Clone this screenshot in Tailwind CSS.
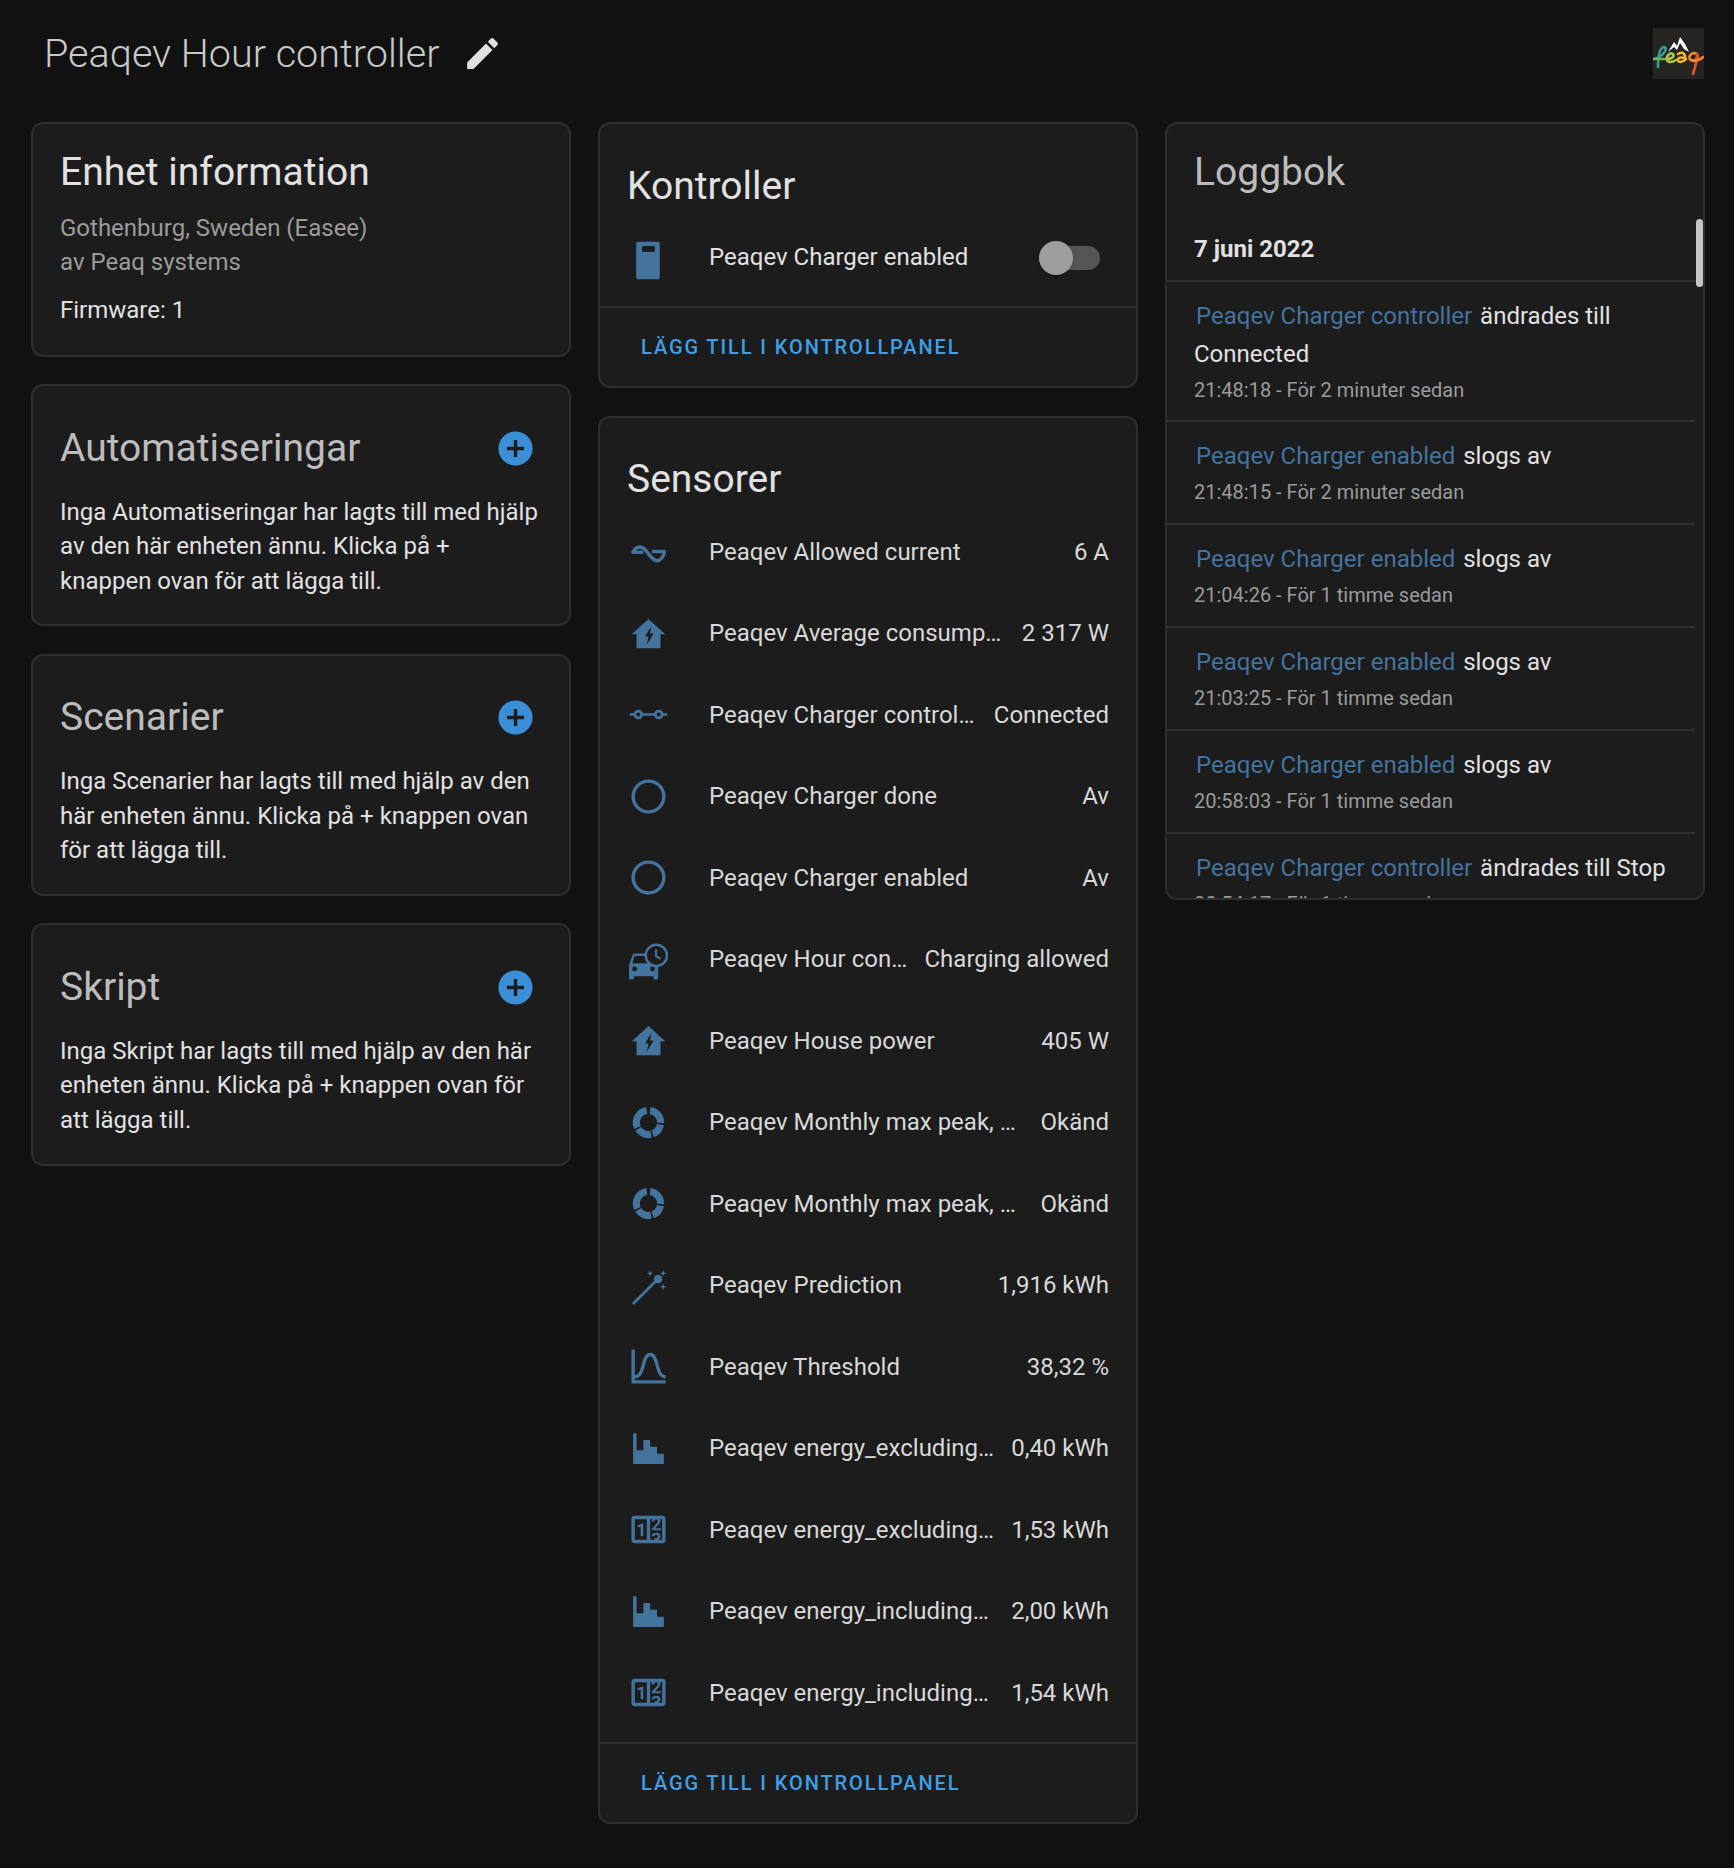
<!DOCTYPE html>
<html lang="en">
<head>
    <meta charset="UTF-8">
    <title>Peaqev Hour controller</title>
    <script src="https://cdn.jsdelivr.net/npm/@tailwindcss/browser@4"></script>
</head>
<body class="bg-[#111111] text-[#e1e1e1] font-[Roboto,sans-serif] text-[24px] leading-[34.5px] min-h-[1868px] overflow-hidden">

    <!-- shared icons -->
    <svg class="hidden">
        <symbol id="i-plus" viewBox="0 0 24 24"><path fill="currentColor" d="M17,13H13V17H11V13H7V11H11V7H13V11H17M12,2A10,10 0 0,0 2,12A10,10 0 0,0 12,22A10,10 0 0,0 22,12A10,10 0 0,0 12,2Z"/></symbol>
        <symbol id="i-home" viewBox="0 0 24 24"><path fill="currentColor" fill-rule="evenodd" d="M12 3.5L2.2 12.5H5V20.7H19V12.5H21.8L12 3.5ZM13.6 7.8L10 13.8H12L11 18.6L15 12H12.9L13.6 7.8Z"/></symbol>
        <symbol id="i-ring" viewBox="0 0 24 24"><circle cx="12" cy="12" r="9" fill="none" stroke="currentColor" stroke-width="2"/></symbol>
        <symbol id="i-donut" viewBox="0 0 24 24"><g fill="none" stroke="currentColor" stroke-width="4.2"><path d="M12.99 4.97A7.1 7.1 0 0 1 19.1 12.25"/><path d="M18.99 13.23A7.1 7.1 0 0 1 14.43 18.67"/><path d="M13.48 18.94A7.1 7.1 0 0 1 5.98 15.76"/><path d="M5.51 14.89A7.1 7.1 0 0 1 11.01 4.97"/></g></symbol>
        <symbol id="i-hist" viewBox="0 0 24 24"><path fill="currentColor" d="M3,3H5V13H9V7H13V11H17V15H21V21H3V3Z"/></symbol>
        <symbol id="i-counter" viewBox="0 0 24 24"><path fill="currentColor" d="M4,4H20A2,2 0 0,1 22,6V18A2,2 0 0,1 20,20H4A2,2 0 0,1 2,18V6A2,2 0 0,1 4,4M4,6V18H11V6H4M20,18V6H18.76C19,6.54 18.95,7.07 18.95,7.13C18.88,7.8 18.41,8.5 18.24,8.75L15.91,11.3L19.23,11.28L19.24,12.5L14.04,12.47L14,11.47C14,11.47 17.05,8.24 17.2,7.95C17.34,7.67 17.91,6 16.5,6C15.27,6.05 15.41,7.3 15.41,7.3L13.87,7.31C13.87,7.31 13.88,6.65 14.25,6H13V18H15.58L15.57,17.14L16.54,17.13C16.54,17.13 17.45,16.97 17.46,16.08C17.5,15.08 16.65,15.08 16.5,15.08C16.37,15.08 15.43,15.13 15.43,15.95H13.91C13.91,15.95 13.95,13.89 16.5,13.89C19.1,13.89 18.96,15.91 18.96,15.91C18.96,15.91 19,17.16 17.85,17.63L18.37,18H20M8.92,16H7.42V10.2L5.62,10.76V9.53L8.76,8.41H8.92V16Z"/></symbol>
    </svg>

    <!-- Header -->
    <header class="h-[107px] mb-[15px] pl-[44px] pr-[30px] flex items-center">
        <h1 class="text-[39.6px] leading-[54px] text-[#c8c8c8] font-light">Peaqev Hour controller</h1>
        <svg class="w-[41px] h-[41px] ml-[22px] text-[#e1e1e1]" viewBox="0 0 24 24"><path fill="currentColor" d="M20.71,7.04C21.1,6.65 21.1,6 20.71,5.63L18.37,3.29C18,2.9 17.35,2.9 16.96,3.29L15.12,5.12L18.87,8.87M3,17.25V21H6.75L17.81,9.93L14.06,6.18L3,17.25Z"/></svg>
        <!-- logo -->
        <svg class="w-[51px] h-[51px] ml-auto bg-[#262422]" viewBox="0 0 51 51" fill="none" stroke-linecap="round" stroke-linejoin="round">
            <polygon fill="#ffffff" points="15,24 21,14 24,18 27,9 32,16 36,24 31,21 27,15 24,22 21,19"/>
            <g stroke-width="2.6">
                <path stroke="#3a9d8f" d="M5 39C5 30 6 20 11 19C15 19 12 28 1 31"/>
                <path stroke="#6fb24e" d="M1 31H12"/>
                <path stroke="#a9c64a" d="M14 31C18 31 22 29 20 26C17 24 13 28 14 32C15 35 20 34 23 32"/>
                <path stroke="#f2b632" d="M25 26C30 23 33 26 32 32C28 35 24 34 25 31C26 29 30 29 33 31"/>
                <path stroke="#f08a2b" d="M44 26C38 23 34 30 38 32C42 34 46 30 44 26"/>
                <path stroke="#e2552b" d="M44 26C44 32 42 40 40 46"/>
                <path stroke="#f08a2b" d="M40 33C44 33 47 32 50 29"/>
            </g>
        </svg>
    </header>

    <main class="flex gap-[27px] pl-[31px] items-start">

        <!-- Column 1 -->
        <div class="w-[540px] flex flex-col gap-[27.5px]">
            <section class="bg-[#1c1c1c] border-2 border-[#2e2e2e] rounded-[12px] pt-[21px] pb-[27.5px] px-[27px]">
                <h2 class="text-[39px] leading-[54px]">Enhet information</h2>
                <div class="mt-[12px] text-[#9b9b9b] leading-[34px]">Gothenburg, Sweden (Easee)<br>av Peaq systems</div>
                <div class="mt-[14px] leading-[34px]">Firmware: 1</div>
            </section>

            <section class="bg-[#1c1c1c] border-2 border-[#2e2e2e] rounded-[12px] pt-[35px] pb-[26px] px-[27px]">
                <div class="flex items-center justify-between h-[54px] pr-[6.5px]">
                    <h2 class="text-[39px] leading-[54px] text-[#bcbcbc]">Automatiseringar</h2>
                    <svg class="w-[41px] h-[41px] text-[#3a8fd6]"><use href="#i-plus"/></svg>
                </div>
                <p class="mt-[19.5px]">Inga Automatiseringar har lagts till med hjälp av den här enheten ännu. Klicka på + knappen ovan för att lägga till.</p>
            </section>

            <section class="bg-[#1c1c1c] border-2 border-[#2e2e2e] rounded-[12px] pt-[34.5px] pb-[26px] px-[27px]">
                <div class="flex items-center justify-between h-[54px] pr-[6.5px]">
                    <h2 class="text-[39px] leading-[54px] text-[#bcbcbc]">Scenarier</h2>
                    <svg class="w-[41px] h-[41px] text-[#3a8fd6]"><use href="#i-plus"/></svg>
                </div>
                <p class="mt-[20px]">Inga Scenarier har lagts till med hjälp av den här enheten ännu. Klicka på + knappen ovan för att lägga till.</p>
            </section>

            <section class="bg-[#1c1c1c] border-2 border-[#2e2e2e] rounded-[12px] pt-[35px] pb-[27px] px-[27px]">
                <div class="flex items-center justify-between h-[54px] pr-[6.5px]">
                    <h2 class="text-[39px] leading-[54px] text-[#bcbcbc]">Skript</h2>
                    <svg class="w-[41px] h-[41px] text-[#3a8fd6]"><use href="#i-plus"/></svg>
                </div>
                <p class="mt-[19.5px]">Inga Skript har lagts till med hjälp av den här enheten ännu. Klicka på + knappen ovan för att lägga till.</p>
            </section>
        </div>

        <!-- Column 2 -->
        <div class="w-[540px] flex flex-col gap-[28px]">
            <section class="bg-[#1c1c1c] border-2 border-[#2e2e2e] rounded-[12px] pt-[34.5px]">
                <h2 class="text-[39px] leading-[54px] px-[27px]">Kontroller</h2>
                <div class="mt-[4px] mb-[7.5px] h-[82px] pl-[29px] pr-[36px] flex items-center">
                    <svg class="w-[41px] h-[41px] mt-[5px] shrink-0 text-[#44739e]" viewBox="0 0 24 24"><path fill="currentColor" fill-rule="evenodd" d="M5.2 1H17A1 1 0 0 1 18 2V22A1 1 0 0 1 17 23H5.2A1 1 0 0 1 4.2 22V2A1 1 0 0 1 5.2 1ZM8.4 3.5A.8.8 0 0 0 7.6 4.3V6.2A.8.8 0 0 0 8.4 7H14.4A.8.8 0 0 0 15.2 6.2V4.3A.8.8 0 0 0 14.4 3.5Z"/></svg>
                    <span class="ml-[39px] flex-1">Peaqev Charger enabled</span>
                    <span class="relative w-[61px] h-[24px] rounded-full bg-[#555555]">
                        <span class="absolute left-0 top-[-5px] w-[34px] h-[34px] rounded-full bg-[#9e9e9e] shadow-md"></span>
                    </span>
                </div>
                <div class="border-t-2 border-[#2e2e2e] h-[80px] pl-[41px] flex items-center text-[20px] font-medium tracking-[1.9px] text-[#3f9fe6]">LÄGG TILL I KONTROLLPANEL</div>
            </section>

            <section class="bg-[#1c1c1c] border-2 border-[#2e2e2e] rounded-[12px] pt-[33.5px]">
                <h2 class="text-[39px] leading-[54px] px-[27px]">Sensorer</h2>
                <div class="mt-[5.5px] mb-[8.5px] text-[#d8d8d8]">
                    <div class="h-[81.5px] pl-[28px] pr-[27px] flex items-center">
                        <svg class="w-[41px] h-[41px] shrink-0 text-[#44739e]" viewBox="0 0 24 24"><g fill="none" stroke="currentColor" stroke-width="2"><path d="M3 12.4C4 10.2 5.5 9.4 7 9.4C9.5 9.4 10.5 11.4 12 13.4C13.5 15.4 15 17.4 17 17.4C19 17.4 21 14.9 21.4 12"/><path d="M2 12.4H9"/><path d="M14 12H22"/></g></svg>
                        <span class="ml-[40px] flex-1 min-w-0 truncate">Peaqev Allowed current</span>
                        <span class="ml-[16.5px] shrink-0">6 A</span>
                    </div>
                    <div class="h-[81.5px] pl-[28px] pr-[27px] flex items-center">
                        <svg class="w-[41px] h-[41px] shrink-0 text-[#44739e]"><use href="#i-home"/></svg>
                        <span class="ml-[40px] flex-1 min-w-0 truncate">Peaqev Average consumption</span>
                        <span class="ml-[16.5px] shrink-0">2 317 W</span>
                    </div>
                    <div class="h-[81.5px] pl-[28px] pr-[27px] flex items-center">
                        <svg class="w-[41px] h-[41px] shrink-0 text-[#44739e]" viewBox="0 0 24 24"><g stroke="currentColor" stroke-width="1.6"><path d="M1 12H23"/><circle cx="6" cy="12" r="2" fill="#1c1c1c"/><circle cx="18" cy="12" r="2" fill="#1c1c1c"/></g></svg>
                        <span class="ml-[40px] flex-1 min-w-0 truncate">Peaqev Charger controller</span>
                        <span class="ml-[16.5px] shrink-0">Connected</span>
                    </div>
                    <div class="h-[81.5px] pl-[28px] pr-[27px] flex items-center">
                        <svg class="w-[41px] h-[41px] shrink-0 text-[#44739e]"><use href="#i-ring"/></svg>
                        <span class="ml-[40px] flex-1 min-w-0 truncate">Peaqev Charger done</span>
                        <span class="ml-[16.5px] shrink-0">Av</span>
                    </div>
                    <div class="h-[81.5px] pl-[28px] pr-[27px] flex items-center">
                        <svg class="w-[41px] h-[41px] shrink-0 text-[#44739e]"><use href="#i-ring"/></svg>
                        <span class="ml-[40px] flex-1 min-w-0 truncate">Peaqev Charger enabled</span>
                        <span class="ml-[16.5px] shrink-0">Av</span>
                    </div>
                    <div class="h-[81.5px] pl-[28px] pr-[27px] flex items-center">
                        <svg class="w-[41px] h-[41px] shrink-0 text-[#44739e]" viewBox="0 0 24 24"><path fill="currentColor" transform="translate(-2.25 3.75) scale(.95)" d="M5,11L6.5,6.5H17.5L19,11M17.5,16A1.5,1.5 0 0,1 16,14.5A1.5,1.5 0 0,1 17.5,13A1.5,1.5 0 0,1 19,14.5A1.5,1.5 0 0,1 17.5,16M6.5,16A1.5,1.5 0 0,1 5,14.5A1.5,1.5 0 0,1 6.5,13A1.5,1.5 0 0,1 8,14.5A1.5,1.5 0 0,1 6.5,16M18.92,6C18.72,5.42 18.16,5 17.5,5H6.5C5.84,5 5.28,5.42 5.08,6L3,12V20A1,1 0 0,0 4,21H5A1,1 0 0,0 6,20V19H18V20A1,1 0 0,0 19,21H20A1,1 0 0,0 21,20V12L18.92,6Z"/><circle cx="16.6" cy="9.6" r="6.2" fill="#1c1c1c" stroke="currentColor" stroke-width="1.4"/><path d="M16.4 6.2V10L19 11.6" fill="none" stroke="currentColor" stroke-width="1.3"/></svg>
                        <span class="ml-[40px] flex-1 min-w-0 truncate">Peaqev Hour controller status</span>
                        <span class="ml-[16.5px] shrink-0">Charging allowed</span>
                    </div>
                    <div class="h-[81.5px] pl-[28px] pr-[27px] flex items-center">
                        <svg class="w-[41px] h-[41px] shrink-0 text-[#44739e]"><use href="#i-home"/></svg>
                        <span class="ml-[40px] flex-1 min-w-0 truncate">Peaqev House power</span>
                        <span class="ml-[16.5px] shrink-0">405 W</span>
                    </div>
                    <div class="h-[81.5px] pl-[28px] pr-[27px] flex items-center">
                        <svg class="w-[41px] h-[41px] shrink-0 text-[#44739e]"><use href="#i-donut"/></svg>
                        <span class="ml-[40px] flex-1 min-w-0 truncate">Peaqev Monthly max peak, average</span>
                        <span class="ml-[16.5px] shrink-0">Okänd</span>
                    </div>
                    <div class="h-[81.5px] pl-[28px] pr-[27px] flex items-center">
                        <svg class="w-[41px] h-[41px] shrink-0 text-[#44739e]"><use href="#i-donut"/></svg>
                        <span class="ml-[40px] flex-1 min-w-0 truncate">Peaqev Monthly max peak, observed</span>
                        <span class="ml-[16.5px] shrink-0">Okänd</span>
                    </div>
                    <div class="h-[81.5px] pl-[28px] pr-[27px] flex items-center">
                        <svg class="w-[41px] h-[41px] shrink-0 text-[#44739e]" viewBox="0 0 24 24"><path d="M2.9 22.8L15.9 9.8" stroke="currentColor" stroke-width="1.7"/><circle cx="17.6" cy="8.2" r="2.5" fill="currentColor"/><path fill="currentColor" d="M12.9 2.9L13.4 4.4L14.9 4.9L13.4 5.4L12.9 6.9L12.4 5.4L10.9 4.9L12.4 4.4ZM20.6 2.9L21.1 4.4L22.6 4.9L21.1 5.4L20.6 6.9L20.1 5.4L18.6 4.9L20.1 4.4ZM20.6 10.8L21.1 12.3L22.6 12.8L21.1 13.3L20.6 14.8L20.1 13.3L18.6 12.8L20.1 12.3Z"/></svg>
                        <span class="ml-[40px] flex-1 min-w-0 truncate">Peaqev Prediction</span>
                        <span class="ml-[16.5px] shrink-0">1,916 kWh</span>
                    </div>
                    <div class="h-[81.5px] pl-[28px] pr-[27px] flex items-center">
                        <svg class="w-[41px] h-[41px] shrink-0 text-[#44739e]" viewBox="0 0 24 24"><path fill="currentColor" d="M9.96,11.31C10.82,8.1 11.5,6 13,6C14.5,6 15.18,8.1 16.04,11.31C17,14.92 18.1,19 22,19V17C19.8,17 19,14.54 17.97,10.8C17.08,7.46 16.15,4 13,4C9.85,4 8.92,7.46 8.03,10.8C7.03,14.54 6.2,17 4,17V2H2V22H22V20H4V19C7.9,19 9,14.92 9.96,11.31Z"/></svg>
                        <span class="ml-[40px] flex-1 min-w-0 truncate">Peaqev Threshold</span>
                        <span class="ml-[16.5px] shrink-0">38,32 %</span>
                    </div>
                    <div class="h-[81.5px] pl-[28px] pr-[27px] flex items-center">
                        <svg class="w-[41px] h-[41px] shrink-0 text-[#44739e]"><use href="#i-hist"/></svg>
                        <span class="ml-[40px] flex-1 min-w-0 truncate">Peaqev energy_excluding_car_daily</span>
                        <span class="ml-[16.5px] shrink-0">0,40 kWh</span>
                    </div>
                    <div class="h-[81.5px] pl-[28px] pr-[27px] flex items-center">
                        <svg class="w-[41px] h-[41px] shrink-0 text-[#44739e]"><use href="#i-counter"/></svg>
                        <span class="ml-[40px] flex-1 min-w-0 truncate">Peaqev energy_excluding_car_hourly</span>
                        <span class="ml-[16.5px] shrink-0">1,53 kWh</span>
                    </div>
                    <div class="h-[81.5px] pl-[28px] pr-[27px] flex items-center">
                        <svg class="w-[41px] h-[41px] shrink-0 text-[#44739e]"><use href="#i-hist"/></svg>
                        <span class="ml-[40px] flex-1 min-w-0 truncate">Peaqev energy_including_car_daily</span>
                        <span class="ml-[16.5px] shrink-0">2,00 kWh</span>
                    </div>
                    <div class="h-[81.5px] pl-[28px] pr-[27px] flex items-center">
                        <svg class="w-[41px] h-[41px] shrink-0 text-[#44739e]"><use href="#i-counter"/></svg>
                        <span class="ml-[40px] flex-1 min-w-0 truncate">Peaqev energy_including_car_hourly</span>
                        <span class="ml-[16.5px] shrink-0">1,54 kWh</span>
                    </div>
                </div>
                <div class="border-t-2 border-[#2e2e2e] h-[80px] pl-[41px] flex items-center text-[20px] font-medium tracking-[1.9px] text-[#3f9fe6]">LÄGG TILL I KONTROLLPANEL</div>
            </section>
        </div>

        <!-- Column 3 -->
        <section class="relative w-[540px] h-[778px] bg-[#1c1c1c] border-2 border-[#2e2e2e] rounded-[12px] overflow-hidden pt-[21px]">
            <h2 class="text-[39px] leading-[54px] px-[27px] text-[#bcbcbc]">Loggbok</h2>
            <div class="mt-[33px] h-[34px] px-[27px] font-bold">7 juni 2022</div>
            <div class="mt-[14px] border-t-2 border-[#2e2e2e]">
                <div class="pt-[15px] pb-[13px] pl-[27px] pr-[27px]">
                    <div class="leading-[38px]"><span class="text-[#44739e] ml-[2px] mr-[2px]">Peaqev Charger controller</span> ändrades till Connected</div>
                    <div class="text-[20px] leading-[34px] text-[#9b9b9b]">21:48:18 - För 2 minuter sedan</div>
                </div>
                <div class="mr-[8px] border-t-2 border-[#2e2e2e] pt-[15px] pb-[14px] pl-[27px]">
                    <div class="leading-[38px]"><span class="text-[#44739e] ml-[2px] mr-[2px]">Peaqev Charger enabled</span> slogs av</div>
                    <div class="text-[20px] leading-[34px] text-[#9b9b9b]">21:48:15 - För 2 minuter sedan</div>
                </div>
                <div class="mr-[8px] border-t-2 border-[#2e2e2e] pt-[15px] pb-[14px] pl-[27px]">
                    <div class="leading-[38px]"><span class="text-[#44739e] ml-[2px] mr-[2px]">Peaqev Charger enabled</span> slogs av</div>
                    <div class="text-[20px] leading-[34px] text-[#9b9b9b]">21:04:26 - För 1 timme sedan</div>
                </div>
                <div class="mr-[8px] border-t-2 border-[#2e2e2e] pt-[15px] pb-[14px] pl-[27px]">
                    <div class="leading-[38px]"><span class="text-[#44739e] ml-[2px] mr-[2px]">Peaqev Charger enabled</span> slogs av</div>
                    <div class="text-[20px] leading-[34px] text-[#9b9b9b]">21:03:25 - För 1 timme sedan</div>
                </div>
                <div class="mr-[8px] border-t-2 border-[#2e2e2e] pt-[15px] pb-[14px] pl-[27px]">
                    <div class="leading-[38px]"><span class="text-[#44739e] ml-[2px] mr-[2px]">Peaqev Charger enabled</span> slogs av</div>
                    <div class="text-[20px] leading-[34px] text-[#9b9b9b]">20:58:03 - För 1 timme sedan</div>
                </div>
                <div class="mr-[8px] border-t-2 border-[#2e2e2e] pt-[15px] pb-[14px] pl-[27px]">
                    <div class="leading-[38px]"><span class="text-[#44739e] ml-[2px] mr-[2px]">Peaqev Charger controller</span> ändrades till Stop</div>
                    <div class="text-[20px] leading-[34px] text-[#9b9b9b]">20:54:17 - För 1 timme sedan</div>
                </div>
            </div>
            <!-- scrollbar -->
            <div class="absolute right-0 top-[95px] w-[7px] h-[68px] rounded-full bg-[#c4c4c4]"></div>
        </section>
    </main>

</body>
</html>
